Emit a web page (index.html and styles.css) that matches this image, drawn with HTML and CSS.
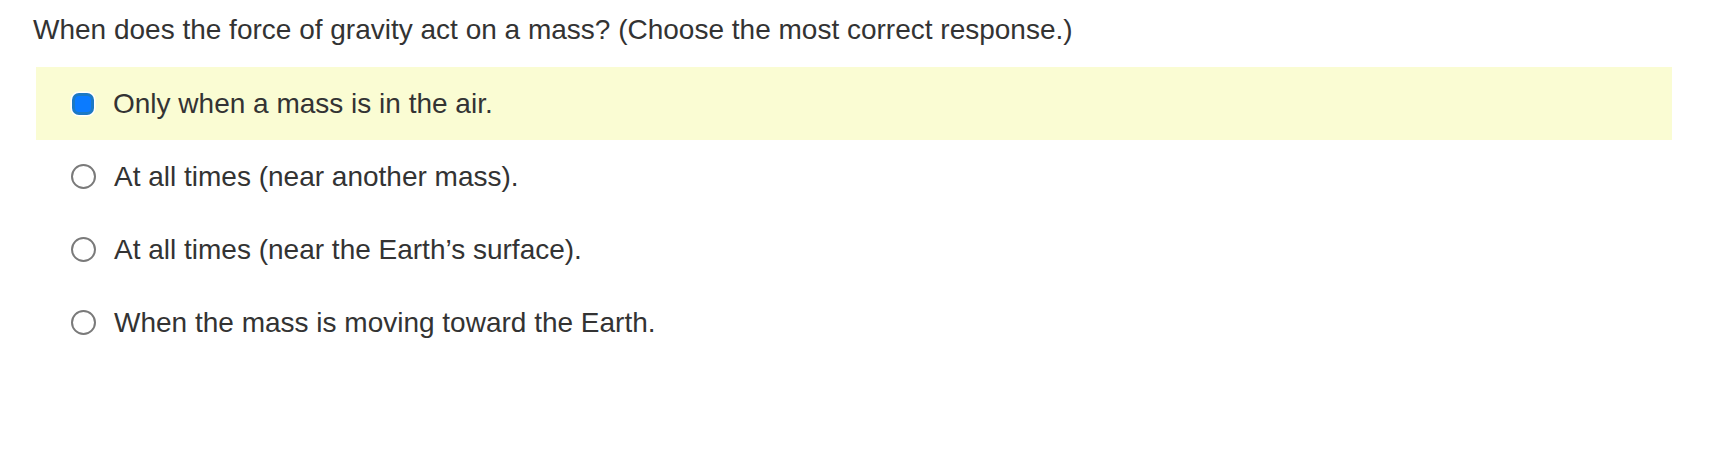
FILE: index.html
```html
<!DOCTYPE html>
<html lang="en">
<head>
<meta charset="utf-8">
<title>Question</title>
<link rel="stylesheet" href="styles.css">
</head>
<body>
<div class="question">
  <p class="prompt">When does the force of gravity act on a mass? (Choose the most correct response.)</p>
  <ul class="choices">
    <li class="choice selected"><span class="radio checked"></span><span class="label">Only when a mass is in the air.</span></li>
    <li class="choice"><span class="radio"></span><span class="label">At all times (near another mass).</span></li>
    <li class="choice"><span class="radio"></span><span class="label">At all times (near the Earth’s surface).</span></li>
    <li class="choice"><span class="radio"></span><span class="label">When the mass is moving toward the Earth.</span></li>
  </ul>
</div>
</body>
</html>
```
FILE: styles.css
```css
html, body {
  margin: 0;
  padding: 0;
  background: #ffffff;
}
body {
  font-family: "Liberation Sans", Arial, Helvetica, sans-serif;
  color: #333333;
}
.question {
  padding: 0 50px 0 36px;
}
.prompt {
  margin: 0 0 0 -3px;
  padding: 14px 0 0 0;
  height: 67px;
  box-sizing: border-box;
  font-size: 28px;
  line-height: 32px;
}
.choices {
  list-style: none;
  margin: 0;
  padding: 0;
}
.choice {
  height: 73px;
  display: flex;
  align-items: center;
  padding-left: 35px;
  font-size: 28px;
}
.choice.selected {
  background: #fafcd3;
}
.radio {
  width: 25px;
  height: 25px;
  box-sizing: border-box;
  border: 2px solid #7a7a7a;
  border-radius: 50%;
  background: #ffffff;
  flex: none;
  margin-right: 18px;
}
.radio.checked {
  width: 22px;
  height: 22px;
  margin-left: 1px;
  margin-right: 19px;
  border: 3px solid #1c79c4;
  border-radius: 7px;
  background: #0b7bff;
  box-shadow: 0 0 0 1.5px #ffffff;
}
.label {
  line-height: 32px;
}
```
